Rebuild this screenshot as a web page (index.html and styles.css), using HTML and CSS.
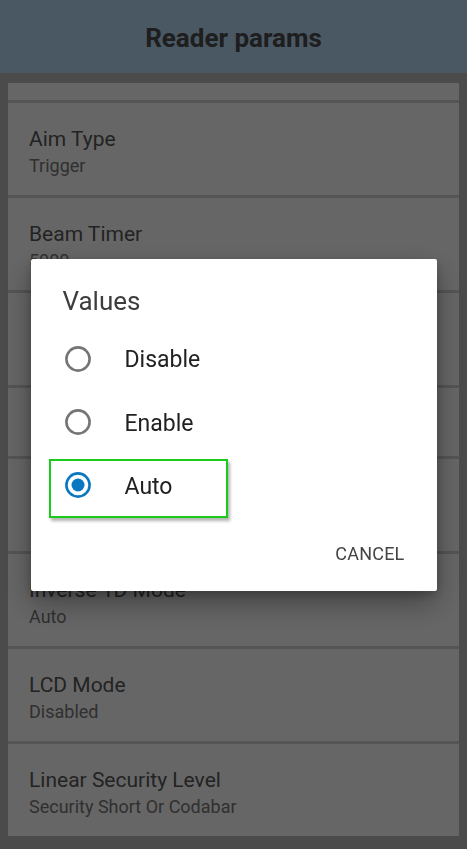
FILE: index.html
```html
<!DOCTYPE html>
<html lang="en">
<head>
<meta charset="utf-8">
<title>Reader params</title>
<link rel="stylesheet" href="styles.css">
</head>
<body>
  <header class="appbar">
    <h1 class="appbar-title">Reader params</h1>
  </header>

  <main class="list">
    <div class="card card-partial"></div>
    <div class="card">
      <div class="card-title">Aim Type</div>
      <div class="card-sub">Trigger</div>
    </div>
    <div class="card">
      <div class="card-title">Beam Timer</div>
      <div class="card-sub">5000</div>
    </div>
    <div class="card"></div>
    <div class="card card-short"></div>
    <div class="card"></div>
    <div class="card">
      <div class="card-title">Inverse 1D Mode</div>
      <div class="card-sub">Auto</div>
    </div>
    <div class="card">
      <div class="card-title">LCD Mode</div>
      <div class="card-sub">Disabled</div>
    </div>
    <div class="card">
      <div class="card-title">Linear Security Level</div>
      <div class="card-sub">Security Short Or Codabar</div>
    </div>
  </main>

  <div class="scrim">
    <div class="dialog" role="dialog">
      <h2 class="dialog-title">Values</h2>
      <ul class="options">
        <li class="option">
          <svg class="radio" viewBox="0 0 26 26" width="26" height="26"><circle cx="13" cy="13" r="11.6" fill="none" stroke="#757575" stroke-width="2.6"/></svg>
          <span class="option-label">Disable</span>
        </li>
        <li class="option">
          <svg class="radio" viewBox="0 0 26 26" width="26" height="26"><circle cx="13" cy="13" r="11.6" fill="none" stroke="#757575" stroke-width="2.6"/></svg>
          <span class="option-label">Enable</span>
        </li>
        <li class="option option-selected">
          <svg class="radio" viewBox="0 0 26 26" width="26" height="26"><circle cx="13" cy="13" r="11.6" fill="none" stroke="#0a78c0" stroke-width="2.6"/><circle cx="13" cy="13" r="6.5" fill="#0a78c0"/></svg>
          <span class="option-label">Auto</span>
          <span class="highlight"></span>
        </li>
      </ul>
      <div class="actions">
        <span class="btn">CANCEL</span>
      </div>
    </div>
  </div>
</body>
</html>
```

FILE: styles.css
```css
* { box-sizing: border-box; }

html, body {
  margin: 0;
  padding: 0;
}

body {
  width: 467px;
  height: 849px;
  overflow: hidden;
  background: #bcbcbc;
  font-family: Roboto, "Noto Sans", "Liberation Sans", sans-serif;
}

.appbar {
  height: 73px;
  background: #b9dcfa;
  display: flex;
  align-items: center;
  justify-content: center;
}

.appbar-title {
  margin: 0;
  font-size: 26px;
  font-weight: 700;
  color: #4b4b4b;
  line-height: 30px;
  padding-top: 2px;
}

.list {
  margin: 10px 8px 0;
  display: flex;
  flex-direction: column;
  gap: 3px;
  background: #d4d4d4;
}

.card {
  background: #ffffff;
  height: 92px;
  padding: 23px 21px 0;
  overflow: hidden;
}

.card-partial { height: 17px; padding: 0; }
.card-short { height: 68px; }

.card-title {
  font-size: 21px;
  line-height: 26px;
  color: #575757;
  white-space: nowrap;
}

.card-sub {
  margin-top: 3px;
  font-size: 18px;
  line-height: 22px;
  color: #787878;
  white-space: nowrap;
}

.scrim {
  position: fixed;
  inset: 0;
  background: rgba(0, 0, 0, 0.6);
  display: flex;
  align-items: center;
  justify-content: center;
}

.dialog {
  width: 406px;
  background: #ffffff;
  border-radius: 2px;
  box-shadow: 0 12px 30px rgba(0, 0, 0, 0.35), 0 4px 10px rgba(0, 0, 0, 0.2);
  padding-top: 26px;
}

.dialog-title {
  margin: 0 0 10px;
  padding-left: 32px;
  font-size: 26px;
  font-weight: 400;
  line-height: 32px;
  color: #3d3d3d;
}

.options {
  list-style: none;
  margin: 0;
  padding: 0;
}

.option {
  position: relative;
  height: 63px;
  display: flex;
  align-items: center;
  padding-left: 34px;
  gap: 34px;
}

.option:first-child { height: 64px; }

.radio {
  flex: none;
  display: block;
}

.option-label {
  font-size: 23px;
  color: #212121;
  line-height: 28px;
  margin-top: 3px;
}

.highlight {
  position: absolute;
  left: 18px;
  top: 5px;
  width: 179px;
  height: 59px;
  border: 2px solid #1bcb1b;
  box-shadow: 2px 3px 3px rgba(0, 0, 0, 0.3);
  pointer-events: none;
}

.actions {
  display: flex;
  justify-content: flex-end;
  padding: 27px 32px 27px;
}

.btn {
  font-size: 18px;
  line-height: 20px;
  color: #444444;
  letter-spacing: 0.2px;
}
```
